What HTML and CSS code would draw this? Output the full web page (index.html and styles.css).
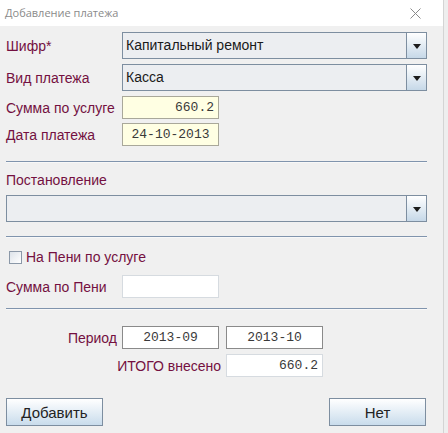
FILE: index.html
```html
<!DOCTYPE html>
<html lang="ru">
<head>
<meta charset="utf-8">
<title>Добавление платежа</title>
<link rel="stylesheet" href="styles.css">
</head>
<body>
<div class="window">
  <div class="titlebar">
    <span class="title">Добавление платежа</span>
    <svg class="close" width="11" height="11" viewBox="0 0 11 11"><path d="M0.5 0.5 L10.5 10.5 M10.5 0.5 L0.5 10.5" stroke="#8a8a8a" stroke-width="1" fill="none"/></svg>
  </div>
  <div class="content">
    <div class="row row-combo first">
      <span class="label">Шифр*</span>
      <div class="combo wide"><span class="combo-text">Капитальный ремонт</span><span class="arrow"><i></i></span></div>
    </div>
    <div class="row row-combo">
      <span class="label">Вид платежа</span>
      <div class="combo wide"><span class="combo-text">Касса</span><span class="arrow"><i></i></span></div>
    </div>
    <div class="row row-field gap5">
      <span class="label">Сумма по услуге</span>
      <div class="field yellow right">660.2</div>
    </div>
    <div class="row row-field gap4">
      <span class="label">Дата платежа</span>
      <div class="field yellow center">24-10-2013</div>
    </div>
    <div class="sep sep1"></div>
    <div class="label block-label">Постановление</div>
    <div class="combo full"><span class="combo-text"></span><span class="arrow"><i></i></span></div>
    <div class="sep sep2"></div>
    <label class="check-row"><span class="checkbox"></span><span class="label">На Пени по услуге</span></label>
    <div class="row row-field peni">
      <span class="label">Сумма по Пени</span>
      <div class="field white"></div>
    </div>
    <div class="sep sep3"></div>
    <div class="row row-field period">
      <span class="label label-right">Период</span>
      <div class="field white center framed">2013-09</div>
      <div class="field white center framed">2013-10</div>
    </div>
    <div class="row row-field itogo">
      <span class="label label-right wide-label">ИТОГО внесено</span>
      <div class="field white right">660.2</div>
    </div>
    <div class="buttons">
      <button class="btn">Добавить</button>
      <button class="btn">Нет</button>
    </div>
  </div>
</div>
</body>
</html>
```
FILE: styles.css
```css
* { box-sizing: border-box; }
html, body { margin: 0; padding: 0; }
body {
  width: 448px;
  height: 433px;
  background: #eeeeee;
  font-family: "Liberation Sans", Arial, sans-serif;
  overflow: hidden;
}
.window {
  width: 444px;
  height: 433px;
  background: #f0f0f0;
  border-right: 1px solid #d4d4d4;
}
.titlebar {
  height: 26px;
  background: #ffffff;
  display: flex;
  align-items: center;
  justify-content: space-between;
  padding: 0 22px 0 5px;
}
.title {
  font-family: "Open Sans", "Liberation Sans", sans-serif;
  font-size: 11px;
  color: #8a8a8a;
  margin-top: -1px;
}
.content {
  padding: 0 0 0 6px;
  width: 427px;
}
.row {
  display: flex;
  align-items: center;
}
.row-combo { height: 27px; margin-top: 5px; }
.row-combo.first { margin-top: 6px; }
.row-field { height: 23px; }
.gap5 { margin-top: 5px; }
.gap4 { margin-top: 4px; }
.label {
  font-size: 14px;
  color: #741041;
  white-space: nowrap;
}
.row .label { width: 116px; flex: none; }
.combo {
  height: 27px;
  display: flex;
  background: #eceef1;
  border: 1px solid #7d8ea0;
}
.combo.wide { width: 305px; }
.combo.full { width: 421px; margin-top: 6px; }
.combo-text {
  flex: 1;
  font-size: 14px;
  color: #1a1a1a;
  padding: 4px 0 0 3px;
}
.arrow {
  width: 20px;
  border-left: 1px solid #7d8ea0;
  background: linear-gradient(#ffffff, #c6d8e8);
  display: flex;
  align-items: center;
  justify-content: center;
}
.arrow i {
  width: 0; height: 0;
  border-left: 4px solid transparent;
  border-right: 4px solid transparent;
  border-top: 5px solid #1c1c1c;
  margin-top: 1px;
}
.field {
  width: 97px;
  height: 23px;
  font-family: "Liberation Mono", "Courier New", monospace;
  font-size: 13px;
  color: #3a3a3a;
  line-height: 21px;
  padding: 0 4px;
}
.yellow {
  background: #ffffe3;
  border: 1px solid #a9a89a;
}
.white {
  background: #ffffff;
  border: 1px solid #d6dbe0;
}
.framed { border-color: #8a8a8a; }
.right { text-align: right; }
.center { text-align: center; }
.sep {
  width: 421px;
  height: 2px;
  border-top: 1px solid #8094ad;
  border-bottom: 1px solid #f8f8f8;
}
.sep1 { margin-top: 15px; }
.block-label { margin-top: 9px; height: 17px; line-height: 17px; }
.sep2 { margin-top: 14px; }
.check-row {
  display: flex;
  align-items: center;
  margin-top: 12px;
  height: 14px;
  padding-left: 3px;
}
.checkbox {
  width: 13px;
  height: 13px;
  border: 1px solid #8b98a8;
  background: linear-gradient(135deg, #dde3ea, #ffffff);
  margin-right: 4px;
}
.peni { margin-top: 11px; }
.sep3 { margin-top: 10px; }
.period { margin-top: 16px; }
.period .field + .field { margin-left: 7px; }
.label-right { text-align: right; padding-right: 5px; }
.itogo { margin-top: 5px; }
.itogo .wide-label { width: 220px; }
.buttons {
  display: flex;
  justify-content: space-between;
  margin-top: 21px;
  width: 420px;
}
.btn {
  width: 97px;
  height: 28px;
  border: 1px solid #7d8ea0;
  background: linear-gradient(#ffffff, #c9dcec);
  font-family: "Liberation Sans", Arial, sans-serif;
  font-size: 15px;
  color: #222;
  padding: 0;
}
```
